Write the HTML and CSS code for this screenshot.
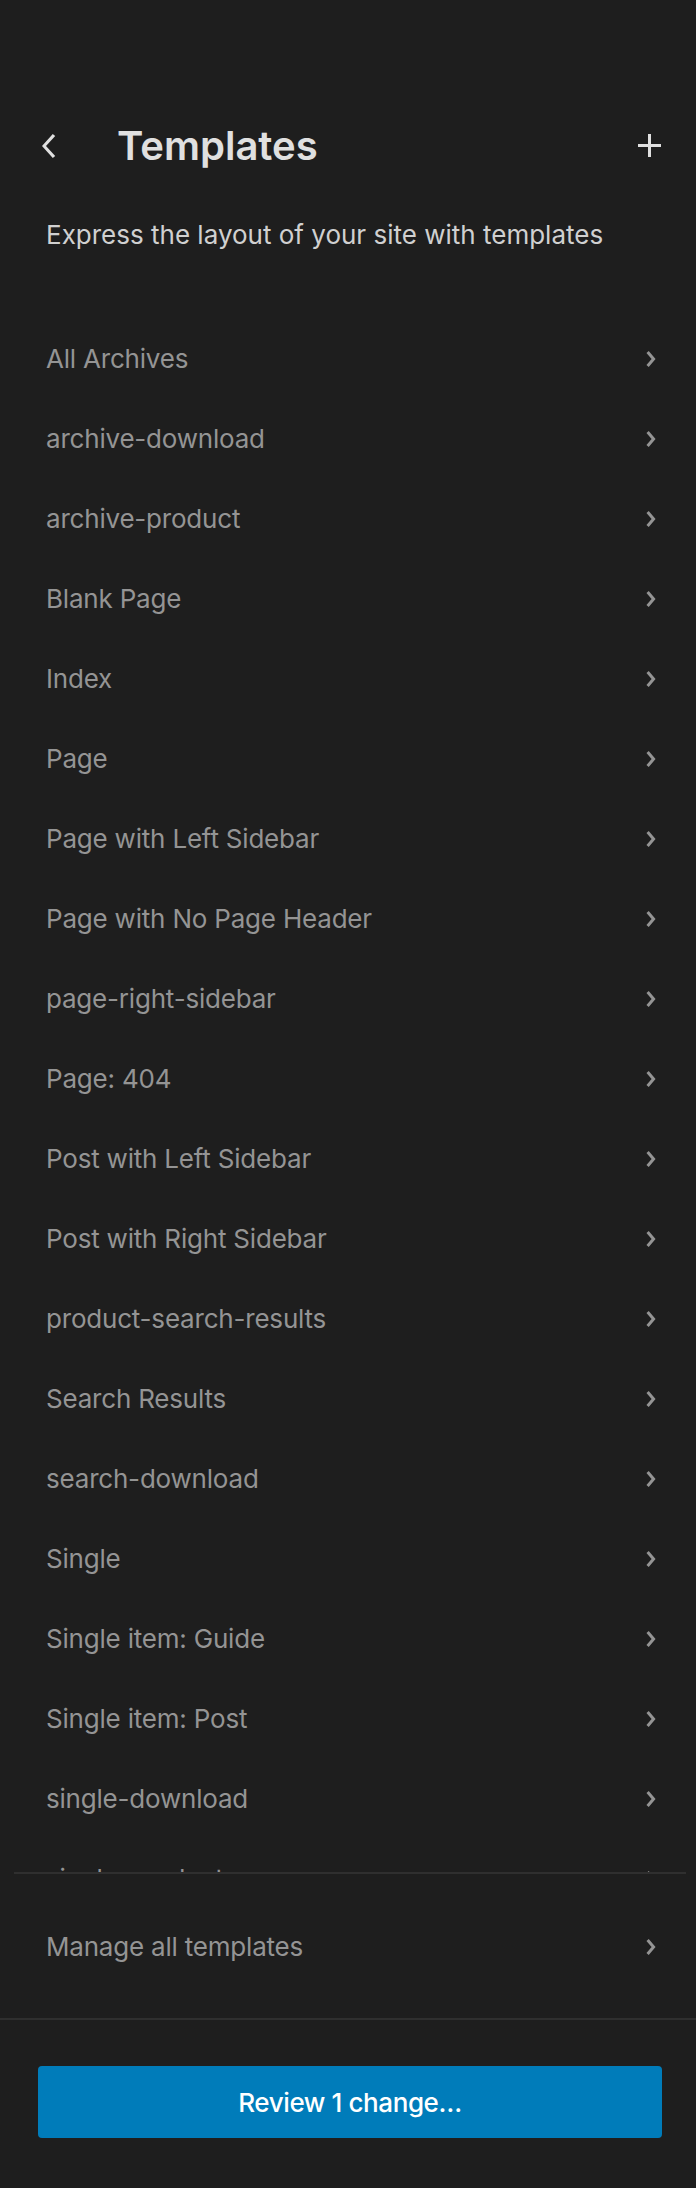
FILE: index.html
```html
<!DOCTYPE html>
<html>
<head>
    <meta charset="UTF-8">
    <meta name="viewport" content="width=device-width, initial-scale=1.0">
    <title>Templates</title>
    <link rel="stylesheet" href="styles.css">
</head>
<body>
    <div class="sidebar">
        <div class="header">
            <button class="icon-button back" aria-label="Back">
                <svg viewBox="0 0 24 24" width="48" height="48"><path d="M14.6 7l-1.2-1L8 12l5.4 6 1.2-1-4.6-5z"/></svg>
            </button>
            <h2 class="title">Templates</h2>
            <button class="icon-button add" aria-label="Add New Template">
                <svg viewBox="0 0 24 24" width="48" height="48"><path d="M11 12.5V17.5H12.5V12.5H17.5V11H12.5V6H11V11H6V12.5H11Z"/></svg>
            </button>
        </div>
        <p class="description">Express the layout of your site with templates</p>

        <div class="list">
            <a class="item" href="#">All Archives<svg viewBox="0 0 24 24" width="48" height="48"><path d="M10.8622 8.04053L14.2805 12.0286L10.8622 16.0167L9.72327 15.0405L12.3049 12.0286L9.72327 9.01672L10.8622 8.04053Z"/></svg></a>
            <a class="item" href="#">archive-download<svg viewBox="0 0 24 24" width="48" height="48"><path d="M10.8622 8.04053L14.2805 12.0286L10.8622 16.0167L9.72327 15.0405L12.3049 12.0286L9.72327 9.01672L10.8622 8.04053Z"/></svg></a>
            <a class="item" href="#">archive-product<svg viewBox="0 0 24 24" width="48" height="48"><path d="M10.8622 8.04053L14.2805 12.0286L10.8622 16.0167L9.72327 15.0405L12.3049 12.0286L9.72327 9.01672L10.8622 8.04053Z"/></svg></a>
            <a class="item" href="#">Blank Page<svg viewBox="0 0 24 24" width="48" height="48"><path d="M10.8622 8.04053L14.2805 12.0286L10.8622 16.0167L9.72327 15.0405L12.3049 12.0286L9.72327 9.01672L10.8622 8.04053Z"/></svg></a>
            <a class="item" href="#">Index<svg viewBox="0 0 24 24" width="48" height="48"><path d="M10.8622 8.04053L14.2805 12.0286L10.8622 16.0167L9.72327 15.0405L12.3049 12.0286L9.72327 9.01672L10.8622 8.04053Z"/></svg></a>
            <a class="item" href="#">Page<svg viewBox="0 0 24 24" width="48" height="48"><path d="M10.8622 8.04053L14.2805 12.0286L10.8622 16.0167L9.72327 15.0405L12.3049 12.0286L9.72327 9.01672L10.8622 8.04053Z"/></svg></a>
            <a class="item" href="#">Page with Left Sidebar<svg viewBox="0 0 24 24" width="48" height="48"><path d="M10.8622 8.04053L14.2805 12.0286L10.8622 16.0167L9.72327 15.0405L12.3049 12.0286L9.72327 9.01672L10.8622 8.04053Z"/></svg></a>
            <a class="item" href="#">Page with No Page Header<svg viewBox="0 0 24 24" width="48" height="48"><path d="M10.8622 8.04053L14.2805 12.0286L10.8622 16.0167L9.72327 15.0405L12.3049 12.0286L9.72327 9.01672L10.8622 8.04053Z"/></svg></a>
            <a class="item" href="#">page-right-sidebar<svg viewBox="0 0 24 24" width="48" height="48"><path d="M10.8622 8.04053L14.2805 12.0286L10.8622 16.0167L9.72327 15.0405L12.3049 12.0286L9.72327 9.01672L10.8622 8.04053Z"/></svg></a>
            <a class="item" href="#">Page: 404<svg viewBox="0 0 24 24" width="48" height="48"><path d="M10.8622 8.04053L14.2805 12.0286L10.8622 16.0167L9.72327 15.0405L12.3049 12.0286L9.72327 9.01672L10.8622 8.04053Z"/></svg></a>
            <a class="item" href="#">Post with Left Sidebar<svg viewBox="0 0 24 24" width="48" height="48"><path d="M10.8622 8.04053L14.2805 12.0286L10.8622 16.0167L9.72327 15.0405L12.3049 12.0286L9.72327 9.01672L10.8622 8.04053Z"/></svg></a>
            <a class="item" href="#">Post with Right Sidebar<svg viewBox="0 0 24 24" width="48" height="48"><path d="M10.8622 8.04053L14.2805 12.0286L10.8622 16.0167L9.72327 15.0405L12.3049 12.0286L9.72327 9.01672L10.8622 8.04053Z"/></svg></a>
            <a class="item" href="#">product-search-results<svg viewBox="0 0 24 24" width="48" height="48"><path d="M10.8622 8.04053L14.2805 12.0286L10.8622 16.0167L9.72327 15.0405L12.3049 12.0286L9.72327 9.01672L10.8622 8.04053Z"/></svg></a>
            <a class="item" href="#">Search Results<svg viewBox="0 0 24 24" width="48" height="48"><path d="M10.8622 8.04053L14.2805 12.0286L10.8622 16.0167L9.72327 15.0405L12.3049 12.0286L9.72327 9.01672L10.8622 8.04053Z"/></svg></a>
            <a class="item" href="#">search-download<svg viewBox="0 0 24 24" width="48" height="48"><path d="M10.8622 8.04053L14.2805 12.0286L10.8622 16.0167L9.72327 15.0405L12.3049 12.0286L9.72327 9.01672L10.8622 8.04053Z"/></svg></a>
            <a class="item" href="#">Single<svg viewBox="0 0 24 24" width="48" height="48"><path d="M10.8622 8.04053L14.2805 12.0286L10.8622 16.0167L9.72327 15.0405L12.3049 12.0286L9.72327 9.01672L10.8622 8.04053Z"/></svg></a>
            <a class="item" href="#">Single item: Guide<svg viewBox="0 0 24 24" width="48" height="48"><path d="M10.8622 8.04053L14.2805 12.0286L10.8622 16.0167L9.72327 15.0405L12.3049 12.0286L9.72327 9.01672L10.8622 8.04053Z"/></svg></a>
            <a class="item" href="#">Single item: Post<svg viewBox="0 0 24 24" width="48" height="48"><path d="M10.8622 8.04053L14.2805 12.0286L10.8622 16.0167L9.72327 15.0405L12.3049 12.0286L9.72327 9.01672L10.8622 8.04053Z"/></svg></a>
            <a class="item" href="#">single-download<svg viewBox="0 0 24 24" width="48" height="48"><path d="M10.8622 8.04053L14.2805 12.0286L10.8622 16.0167L9.72327 15.0405L12.3049 12.0286L9.72327 9.01672L10.8622 8.04053Z"/></svg></a>
            <a class="item" href="#">single-product<svg viewBox="0 0 24 24" width="48" height="48"><path d="M10.8622 8.04053L14.2805 12.0286L10.8622 16.0167L9.72327 15.0405L12.3049 12.0286L9.72327 9.01672L10.8622 8.04053Z"/></svg></a>
        </div>

        <div class="manage">
            <a class="item" href="#">Manage all templates<svg viewBox="0 0 24 24" width="48" height="48"><path d="M10.8622 8.04053L14.2805 12.0286L10.8622 16.0167L9.72327 15.0405L12.3049 12.0286L9.72327 9.01672L10.8622 8.04053Z"/></svg></a>
        </div>

        <div class="footer">
            <button class="save-button">Review 1 change…</button>
        </div>
    </div>
</body>
</html>
```

FILE: styles.css
```css
body {
    margin: 0;
    background-color: #1e1e1e;
    font-family: Inter, 'Noto Sans', Arial, sans-serif;
}
.sidebar {
    padding-top: 122px;
}
.header {
    display: flex;
    align-items: center;
    height: 48px;
    padding: 0 22px 0 26px;
}
.icon-button {
    width: 48px;
    height: 48px;
    padding: 0;
    border: none;
    background: none;
    cursor: pointer;
}
.icon-button svg {
    display: block;
    fill: #e0e0e0;
}
.title {
    flex: 1;
    margin: 0 0 0 43px;
    font-size: 40px;
    line-height: 48px;
    font-weight: 600;
    color: #e0e0e0;
}
.description {
    margin: 47px 0 0;
    padding: 0 46px;
    font-size: 26px;
    line-height: 36px;
    color: #d0d0d0;
}
.list {
    margin-top: 66px;
    height: 1553px;
    overflow: hidden;
}
.item {
    display: flex;
    align-items: center;
    justify-content: space-between;
    height: 80px;
    padding: 0 21px 0 46px;
    font-size: 26px;
    line-height: 80px;
    letter-spacing: -0.2px;
    color: #949494;
    text-decoration: none;
}
.item svg {
    fill: #949494;
}
.manage {
    margin: 0 10px 0 14px;
    border-top: 2px solid #2f2f2f;
    padding: 33px 0 31px;
}
.manage .item {
    padding: 0 11px 0 32px;
}
.footer {
    border-top: 2px solid #2f2f2f;
    padding: 46px 34px 48px 38px;
}
.save-button {
    display: block;
    width: 100%;
    height: 72px;
    border: none;
    border-radius: 4px;
    background-color: #007cba;
    color: #ffffff;
    font-family: Inter, 'Noto Sans', Arial, sans-serif;
    font-size: 26px;
    font-weight: 500;
    letter-spacing: -0.4px;
    cursor: pointer;
}
```
